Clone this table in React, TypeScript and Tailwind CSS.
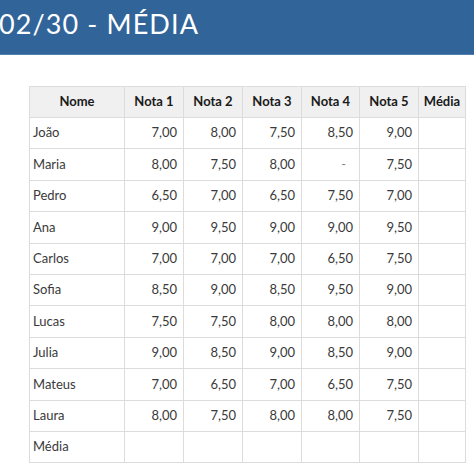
import React from "react";

const rows: [string, string, string, string, string, string][] = [
  ["João", "7,00", "8,00", "7,50", "8,50", "9,00"],
  ["Maria", "8,00", "7,50", "8,00", "-", "7,50"],
  ["Pedro", "6,50", "7,00", "6,50", "7,50", "7,00"],
  ["Ana", "9,00", "9,50", "9,00", "9,00", "9,50"],
  ["Carlos", "7,00", "7,00", "7,00", "6,50", "7,50"],
  ["Sofia", "8,50", "9,00", "8,50", "9,50", "9,00"],
  ["Lucas", "7,50", "7,50", "8,00", "8,00", "8,00"],
  ["Julia", "9,00", "8,50", "9,00", "8,50", "9,00"],
  ["Mateus", "7,00", "6,50", "7,00", "6,50", "7,50"],
  ["Laura", "8,00", "7,50", "8,00", "8,00", "7,50"],
];

const widths = ["w-[95px]", "w-[59px]", "w-[59px]", "w-[59px]", "w-[58px]", "w-[59px]", "w-[47px]"];
const heads = ["Nome", "Nota 1", "Nota 2", "Nota 3", "Nota 4", "Nota 5", "Média"];

export default function App() {
  return (
    <div className="w-[474px] h-[470px] bg-white overflow-hidden" style={{ fontFamily: "Lato, 'Noto Sans', sans-serif" }}>
      <div className="h-[55px] bg-[#31659a] border-b border-[#4f7fae] flex items-center">
        <h1 className="text-white text-[27px] leading-none -ml-[1px] mt-[-8px] tracking-[1.1px]">02/30 - MÉDIA</h1>
      </div>
      <div className="pl-[29px] pt-[31px]">
        <table className="border-collapse table-fixed text-[13px] text-[#3a3a3a]">
          <colgroup>
            {widths.map((w, i) => (
              <col key={i} className={w} />
            ))}
          </colgroup>
          <thead>
            <tr className="h-[31px] bg-[#f0f0f0]">
              {heads.map((h) => (
                <th key={h} className="border border-[#dcdcdc] font-bold text-[#1a1a1a] text-center p-0">
                  {h}
                </th>
              ))}
            </tr>
          </thead>
          <tbody>
            {rows.map((r) => (
              <tr key={r[0]} className="h-[31.4px]">
                <td className="border border-[#dcdcdc] pl-[3px] text-left">{r[0]}</td>
                {r.slice(1).map((v, i) => (
                  <td key={i} className={`border border-[#dcdcdc] text-right ${v === "-" ? "pr-[13px] text-[#888]" : "pr-[6px]"}`}>
                    {v}
                  </td>
                ))}
                <td className="border border-[#dcdcdc]"></td>
              </tr>
            ))}
            <tr className="h-[31.4px]">
              <td className="border border-[#dcdcdc] pl-[3px] text-left">Média</td>
              {[0, 1, 2, 3, 4, 5].map((i) => (
                <td key={i} className="border border-[#dcdcdc]"></td>
              ))}
            </tr>
          </tbody>
        </table>
      </div>
    </div>
  );
}
